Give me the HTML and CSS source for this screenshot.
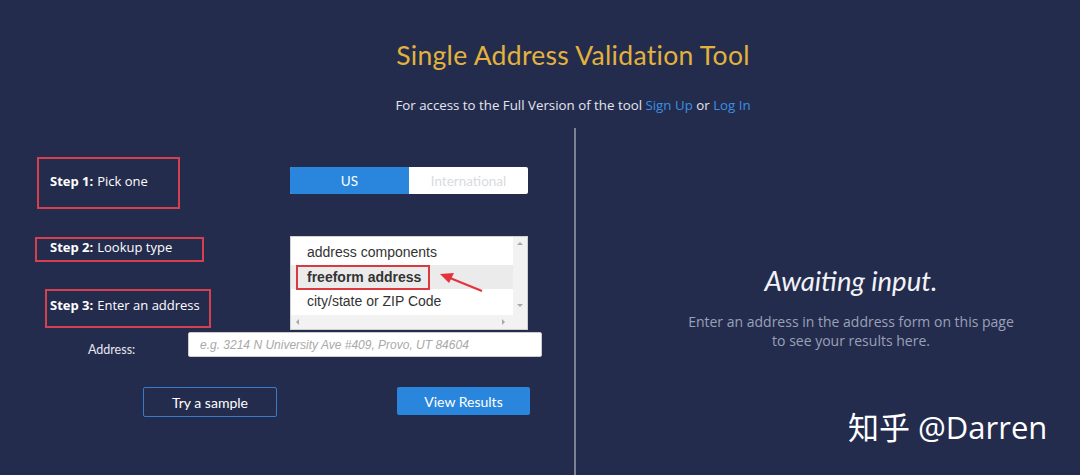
FILE: index.html
```html
<!DOCTYPE html>
<html lang="en">
<head>
  <meta charset="UTF-8">
  <meta name="viewport" content="width=device-width, initial-scale=1.0">
  <title>Single Address Validation Tool</title>
  <link rel="stylesheet" href="styles.css">
</head>
<body>

  <div class="header">
    <h1>Single Address Validation Tool</h1>
    <p class="access">For access to the Full Version of the tool <a href="#">Sign Up</a> or <a href="#">Log In</a></p>
  </div>

  <div class="main">
    <!-- Formulário -->
    <div class="form-side">
      <div class="steps">
        <div class="labels">
          <div class="step step1"><b>Step 1:</b> Pick one</div>
          <div class="step step2"><b>Step 2:</b> Lookup type</div>
          <div class="step step3"><b>Step 3:</b> Enter an address</div>
        </div>
        <div class="controls">
          <div class="toggle">
            <span class="opt active">US</span>
            <span class="opt">International</span>
          </div>
          <div class="listbox">
            <div class="list-body">
              <div class="items">
                <div class="item">address components</div>
                <div class="item selected"><span class="mark">freeform address</span></div>
                <div class="item">city/state or ZIP Code</div>
              </div>
              <div class="vscroll">
                <span class="tri up"></span>
                <span class="tri down"></span>
              </div>
            </div>
            <div class="hscroll">
              <span class="tri left"></span>
              <span class="tri right"></span>
            </div>
            <svg class="arrow" width="50" height="24" viewBox="0 0 50 24">
              <line x1="46" y1="21" x2="14" y2="8" stroke="#e5333d" stroke-width="2.2"/>
              <polygon points="4,4 18,3 13,13" fill="#e5333d"/>
            </svg>
          </div>
        </div>
      </div>

      <div class="address-row">
        <label for="addr">Address:</label>
        <input type="text" id="addr" placeholder="e.g. 3214 N University Ave #409, Provo, UT 84604">
      </div>

      <div class="buttons">
        <button class="btn-outline">Try a sample</button>
        <button class="btn-blue">View Results</button>
      </div>
    </div>

    <div class="divider"></div>

    <!-- Resultados -->
    <div class="results">
      <h2>Awaiting input.</h2>
      <p>Enter an address in the address form on this page<br>to see your results here.</p>
      <div class="watermark">知乎 @Darren</div>
    </div>
  </div>

</body>
</html>
```

FILE: styles.css
```css
body {
  margin: 0;
  width: 1080px;
  height: 475px;
  overflow: hidden;
  background-color: #242c4e;
  font-family: "Open Sans", "Liberation Sans", sans-serif;
  color: #fff;
}
.header {
  padding-left: 66px;
  text-align: center;
  height: 128px;
}
h1 {
  margin: 0;
  padding-top: 39px;
  font-family: Lato, "Open Sans", sans-serif;
  font-weight: 400;
  font-size: 26.5px;
  line-height: 32px;
  color: #e2b23c;
  letter-spacing: 0.3px;
}
.access {
  margin: 24px 0 0;
  font-size: 13.3px;
  line-height: 20px;
  color: #e3e6ee;
}
.access a {
  color: #3b8fe2;
  text-decoration: none;
}
.main {
  display: flex;
  height: 347px;
}
.form-side {
  width: 574px;
}
.divider {
  width: 2px;
  background-color: #7c8194;
}
.steps {
  display: flex;
}
.labels {
  width: 290px;
  padding-top: 29px;
}
.step {
  border: 2px solid #d6404e;
  font-size: 13px;
  color: #fff;
  box-sizing: border-box;
  display: flex;
  align-items: center;
}
.step b {
  font-weight: 700;
  margin-right: 4px;
}
.step1 {
  margin-left: 37px;
  width: 143px;
  height: 52px;
  padding-left: 11px;
  padding-bottom: 4px;
}
.step2 {
  margin: 28px 0 0 35px;
  width: 169px;
  height: 25px;
  padding-left: 13px;
  padding-bottom: 5px;
}
.step3 {
  margin: 27px 0 0 45px;
  width: 166px;
  height: 39px;
  padding-left: 3px;
  padding-bottom: 7px;
}
.controls {
  width: 238px;
  padding-top: 39px;
}
.toggle {
  display: flex;
  height: 27px;
  border-radius: 2px;
  overflow: hidden;
  background-color: #fff;
  font-family: Lato, sans-serif;
}
.opt {
  flex: 1;
  display: flex;
  align-items: center;
  justify-content: center;
  font-size: 13.5px;
  color: #d8dbe0;
}
.opt.active {
  background-color: #2a86dc;
  color: #fff;
}
.listbox {
  position: relative;
  margin-top: 42px;
  height: 94px;
  background-color: #fff;
  border: 1px solid #d0d0d0;
  box-sizing: border-box;
  font-family: "Liberation Sans", Arial, sans-serif;
  font-size: 14px;
  color: #333;
}
.list-body {
  display: flex;
  height: 78px;
}
.items {
  flex: 1;
  padding-top: 3px;
}
.item {
  height: 24.5px;
  line-height: 24.5px;
  padding-left: 16px;
}
.item.selected {
  background-color: #ebebeb;
  font-weight: 700;
  padding-left: 5px;
}
.mark {
  display: inline-block;
  border: 2px solid #d9393f;
  padding: 0 7px 0 9px;
  line-height: 21px;
}
.vscroll {
  width: 14px;
  background-color: #f2f2f2;
  display: flex;
  flex-direction: column;
  justify-content: space-between;
  align-items: center;
  padding: 5px 0 8px;
  box-sizing: border-box;
}
.hscroll {
  height: 14px;
  background-color: #f2f2f2;
  display: flex;
  justify-content: space-between;
  align-items: center;
  padding: 0 22px 0 5px;
}
.tri {
  width: 0;
  height: 0;
  border: 3px solid transparent;
}
.tri.up { border-bottom-color: #a8a8a8; border-top-width: 0; }
.tri.down { border-top-color: #a8a8a8; border-bottom-width: 0; }
.tri.left { border-right-color: #a8a8a8; border-left-width: 0; }
.tri.right { border-left-color: #a8a8a8; border-right-width: 0; }
.arrow {
  position: absolute;
  left: 145px;
  top: 33px;
}
.address-row {
  display: flex;
  align-items: center;
  margin-top: 2px;
  height: 25px;
}
.address-row label {
  width: 100px;
  padding-left: 88px;
  padding-top: 9px;
  font-family: Lato, sans-serif;
  font-size: 12.5px;
  color: #e6e8ee;
}
.address-row input {
  width: 354px;
  height: 25px;
  box-sizing: border-box;
  border: 1px solid #ccc;
  border-radius: 2px;
  padding: 0 11px;
  font-family: "Liberation Sans", Arial, sans-serif;
  font-size: 12px;
  font-style: italic;
}
.address-row input::placeholder {
  color: #a9a9a9;
}
.buttons {
  display: flex;
  margin-top: 30px;
}
.buttons button {
  font-family: Lato, sans-serif;
  font-size: 14px;
  border-radius: 2px;
  cursor: pointer;
  color: #fff;
}
.btn-outline {
  margin-left: 143px;
  width: 134px;
  height: 30px;
  background-color: transparent;
  border: 1px solid #3a7bc8;
  color: #dfe3ea;
}
.btn-outline:hover {
  background-color: #2c3560;
}
.btn-blue {
  margin-left: 120px;
  width: 133px;
  height: 28px;
  background-color: #2a86dc;
  border: none;
}
.btn-blue:hover {
  background-color: #2477c6;
}
.results {
  flex: 1;
  padding-left: 46px;
  text-align: center;
  position: relative;
}
.results h2 {
  margin: 137px 0 0;
  font-family: Lato, sans-serif;
  font-style: italic;
  font-weight: 400;
  font-size: 27.5px;
  line-height: 32px;
  color: #f2f3f6;
}
.results p {
  margin: 15px 0 0;
  font-size: 14px;
  line-height: 19px;
  color: #9aa1b7;
}
.watermark {
  position: absolute;
  left: 272px;
  top: 275px;
  font-family: "Open Sans", "Noto Sans CJK SC", sans-serif;
  font-size: 31px;
  color: #fff;
  white-space: nowrap;
}
```
